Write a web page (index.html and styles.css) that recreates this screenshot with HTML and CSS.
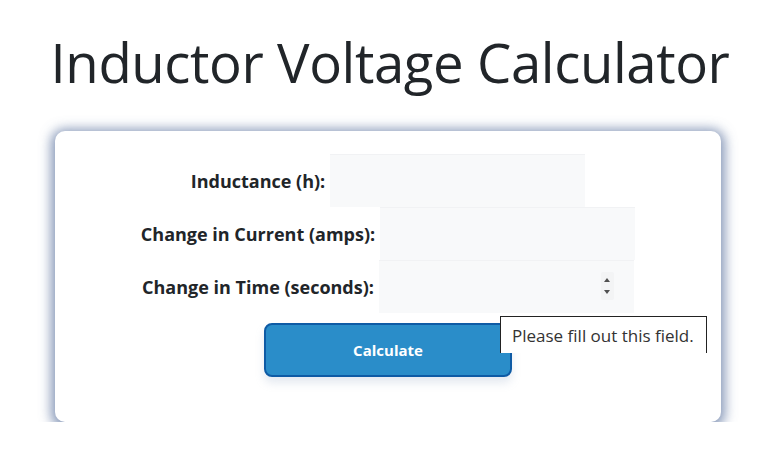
FILE: index.html
```html
<!DOCTYPE html>
<html lang="en">
<head>
    <meta charset="UTF-8">
    <meta name="viewport" content="width=device-width, initial-scale=1.0">
    <title>Inductor Voltage Calculator</title>
    <link rel="stylesheet" href="styles.css">
</head>
<body>
    <h1 class="title">Inductor Voltage Calculator</h1>
    <div class="calculator">
        <form class="calc-form" id="calcForm">
            <div class="row">
                <label for="inductance">Inductance (h):</label>
                <input class="field" type="text" id="inductance">
            </div>
            <div class="row">
                <label for="current">Change in Current (amps):</label>
                <input class="field" type="text" id="current">
            </div>
            <div class="row">
                <label for="time">Change in Time (seconds):</label>
                <span class="number-wrap">
                    <input class="field" type="text" id="time">
                    <span class="spinner">
                        <span class="arrow up"></span>
                        <span class="arrow down"></span>
                    </span>
                </span>
            </div>
            <div class="actions">
                <button class="calc-button" type="button">Calculate</button>
            </div>
        </form>
        <div class="tooltip">Please fill out this field.</div>
    </div>
</body>
</html>
```

FILE: styles.css
```css
body {
    margin: 0;
    font-family: 'Open Sans', 'Noto Sans', sans-serif;
    color: #212529;
    background: #fff;
}
.title {
    margin: 0;
    padding-top: 27px;
    height: 107px;
    box-sizing: border-box;
    text-align: center;
    font-size: 54.5px;
    font-weight: 400;
    line-height: 70px;
    letter-spacing: -0.4px;
}
.calculator {
    position: relative;
    width: 666px;
    margin-left: 55px;
    margin-top: 24px;
    padding: 23px 0 45px;
    box-sizing: border-box;
    background: #fff;
    border-radius: 10px;
    box-shadow: 0 2px 12px 4px rgba(85, 110, 155, 0.7);
}
.row {
    display: flex;
    justify-content: center;
    align-items: center;
}
.row label {
    font-size: 18px;
    font-weight: 700;
    margin-right: 5px;
}
.field {
    width: 255px;
    height: 53px;
    box-sizing: border-box;
    border: none;
    border-top: 1px solid #f1f2f4;
    background: #f8f9fa;
    font: inherit;
    padding: 0 12px;
    outline: none;
}
.number-wrap {
    position: relative;
    display: inline-block;
    height: 53px;
}
.spinner {
    position: absolute;
    right: 20px;
    top: 12px;
    width: 13px;
    height: 28px;
    display: flex;
    flex-direction: column;
    align-items: center;
    justify-content: center;
    gap: 8px;
    background: #f3f4f5;
    border-radius: 2px;
}
.arrow {
    width: 0;
    height: 0;
    border-left: 3.5px solid transparent;
    border-right: 3.5px solid transparent;
}
.arrow.up {
    border-bottom: 4px solid #505050;
}
.arrow.down {
    border-top: 4px solid #505050;
}
.actions {
    display: flex;
    justify-content: center;
    margin-top: 10px;
}
.calc-button {
    width: 248px;
    height: 54px;
    background: #2a8dc9;
    color: #fff;
    border: 2px solid #0e5ba5;
    border-radius: 8px;
    font-family: inherit;
    font-size: 15px;
    font-weight: 700;
    box-shadow: 0 6px 8px rgba(150, 170, 200, 0.25);
    cursor: pointer;
}
.tooltip {
    position: absolute;
    left: 445px;
    top: 185px;
    width: 207px;
    height: 37px;
    box-sizing: border-box;
    padding: 7px 0 0 11px;
    background: #fff;
    border: 1px solid #222;
    border-bottom: none;
    font-size: 17px;
    color: #333;
    white-space: nowrap;
}
```
